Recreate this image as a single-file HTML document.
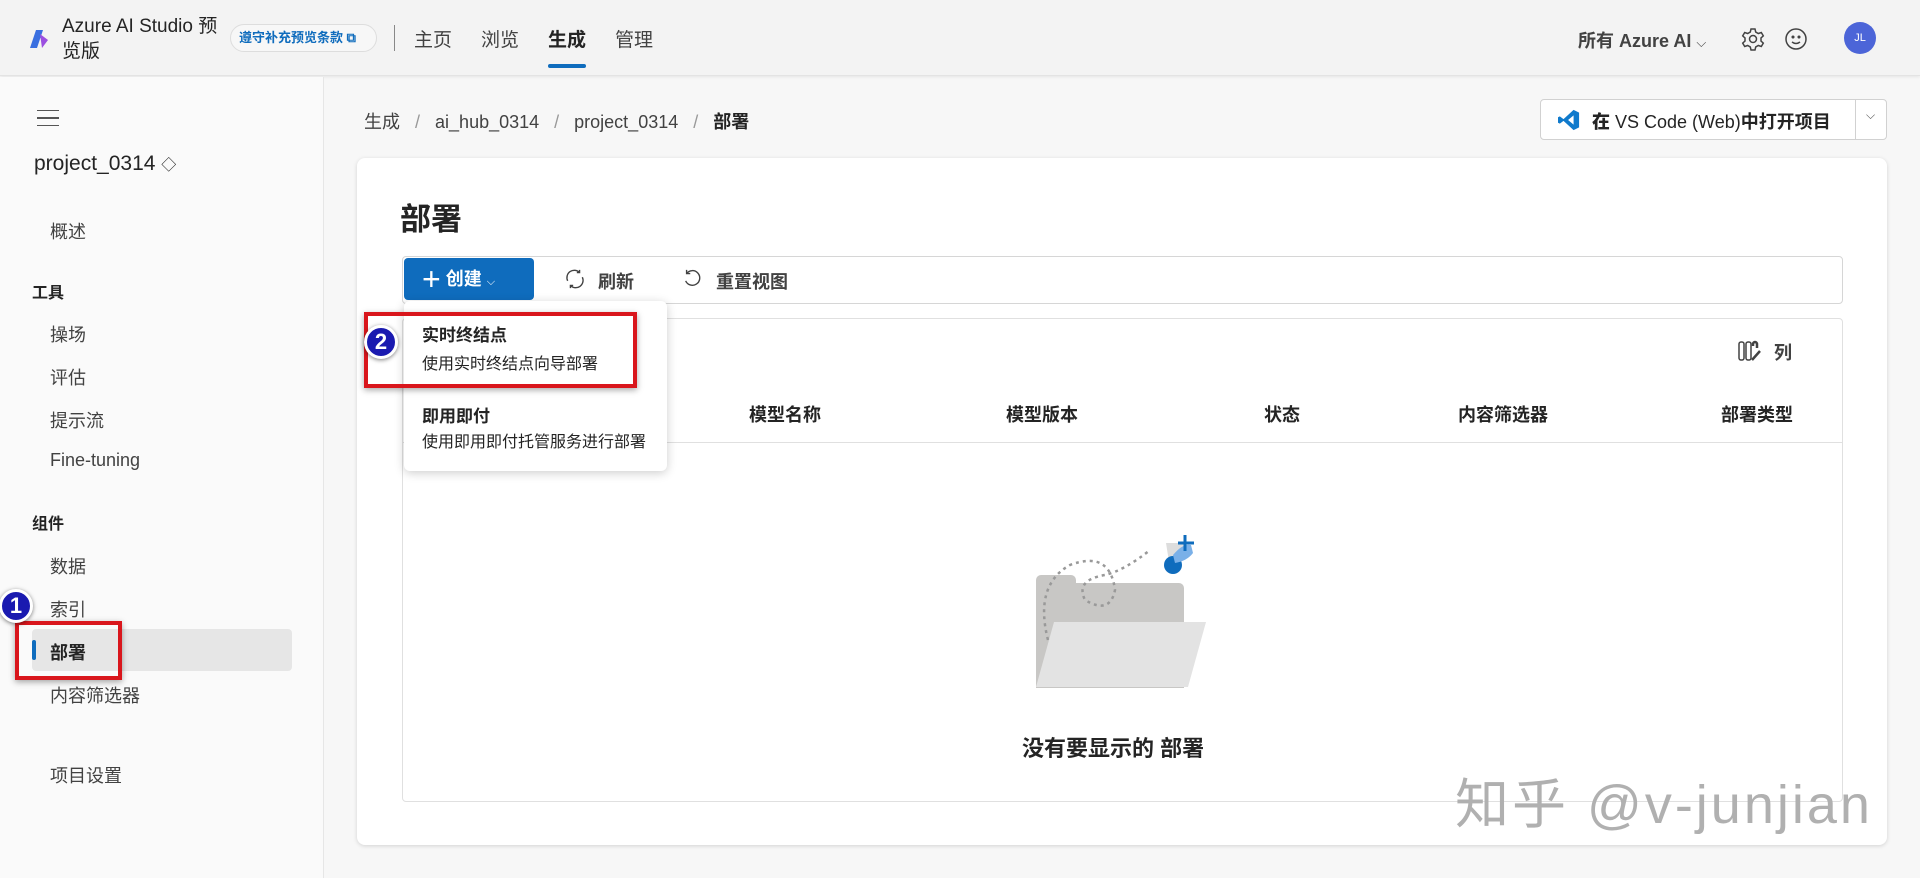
<!DOCTYPE html>
<html><head><meta charset="utf-8"><style>
*{box-sizing:border-box;margin:0;padding:0}
body{width:1920px;height:878px;overflow:hidden;background:#f7f7f7;font-family:"Liberation Sans","Noto Sans CJK SC",sans-serif;color:#242424;position:relative}
.a{position:absolute;white-space:nowrap}
.hdr{left:0;top:0;width:1920px;height:76px;background:#f3f3f3;border-bottom:1px solid #e3e3e3;box-shadow:0 1px 3px rgba(0,0,0,.08)}
.side{left:0;top:77px;width:324px;height:801px;background:#fafafa;border-right:1px solid #e6e6e6}
.nav{font-size:19px;top:25px;color:#424242}
.si{font-size:18px;left:50px;color:#424242}
.sh{font-size:16px;left:32px;font-weight:bold}
.th{font-size:18px;font-weight:bold;top:401px}
.badge{width:34px;height:34px;border-radius:50%;background:#1a1ab0;border:3px solid #fff;box-shadow:0 1px 4px rgba(0,0,0,.5);color:#fff;font-weight:bold;font-size:22px;text-align:center;line-height:28px}
.red{border:4px solid #d9161c;box-shadow:0 2px 6px rgba(0,0,0,.35)}
</style></head><body>
<div class="a hdr"></div>
<svg class="a" style="left:28px;top:28px" width="22" height="22" viewBox="0 0 22 22"><path d="M8 2h7l-6 18H2z" fill="#3a6fe0"/><path d="M12 6l8 6-6 8z" fill="#9b4fe0"/></svg>
<div class="a" style="left:62px;top:14px;font-size:19px;line-height:25px;color:#242424">Azure AI Studio 预<br>览版</div>
<div class="a" style="left:230px;top:24px;width:147px;height:28px;border:1px solid #ddd;border-radius:14px;background:#f7f7f7;font-size:13px;color:#0f6cbd;font-weight:bold;line-height:26px;padding-left:8px">遵守补充预览条款 ⧉</div>
<div class="a" style="left:394px;top:25px;width:1px;height:26px;background:#888"></div>
<div class="a nav" style="left:414px">主页</div>
<div class="a nav" style="left:481px">浏览</div>
<div class="a nav" style="left:548px;font-weight:bold;color:#242424">生成</div>
<div class="a" style="left:548px;top:64px;width:38px;height:4px;border-radius:2px;background:#0f6cbd"></div>
<div class="a nav" style="left:615px">管理</div>
<div class="a" style="left:1578px;top:27px;font-size:18px;font-weight:bold;color:#424242">所有 Azure AI <span style="font-weight:normal;font-size:13px">⌵</span></div>
<svg class="a" style="left:1741px;top:27px" width="24" height="24" viewBox="0 0 24 24" fill="none" stroke="#424242" stroke-width="1.5"><circle cx="12" cy="12" r="3.5"/><path d="M10 2h4l.7 3 2.6 1.5 3-1 2 3.4-2.3 2.1v3l2.3 2.1-2 3.4-3-1-2.6 1.5-.7 3h-4l-.7-3-2.6-1.5-3 1-2-3.4 2.3-2.1v-3L1.7 8.9l2-3.4 3 1L9.3 5z"/></svg>
<svg class="a" style="left:1784px;top:27px" width="24" height="24" viewBox="0 0 24 24" fill="none" stroke="#424242" stroke-width="1.5"><circle cx="12" cy="12" r="10"/><circle cx="9" cy="10" r=".8" fill="#424242"/><circle cx="15" cy="10" r=".8" fill="#424242"/><path d="M8 15q4 3 8 0"/></svg>
<div class="a" style="left:1844px;top:22px;width:32px;height:32px;border-radius:50%;background:#4c65d8;color:#fff;font-size:11px;text-align:center;line-height:32px">JL</div>

<div class="a side"></div>
<div class="a" style="left:37px;top:110px;width:22px;height:16px;border-top:1.5px solid #555;border-bottom:1.5px solid #555"><div style="margin-top:6px;height:1.5px;background:#555"></div></div>
<div class="a" style="left:34px;top:152px;font-size:21px">project_0314 <span style="font-size:15px">◇</span></div>
<div class="a si" style="top:218px">概述</div>
<div class="a sh" style="top:279px">工具</div>
<div class="a si" style="top:321px">操场</div>
<div class="a si" style="top:364px">评估</div>
<div class="a si" style="top:407px">提示流</div>
<div class="a si" style="top:450px">Fine-tuning</div>
<div class="a sh" style="top:510px">组件</div>
<div class="a si" style="top:553px">数据</div>
<div class="a si" style="top:596px">索引</div>
<div class="a" style="left:32px;top:629px;width:260px;height:42px;background:#e6e6e6;border-radius:4px"></div>
<div class="a" style="left:32px;top:640px;width:4px;height:20px;background:#0f6cbd;border-radius:2px"></div>
<div class="a si" style="top:639px;font-weight:bold;color:#242424">部署</div>
<div class="a si" style="top:682px">内容筛选器</div>
<div class="a si" style="top:762px">项目设置</div>
<div class="a red" style="left:15px;top:621px;width:107px;height:59px"></div>
<div class="a badge" style="left:-1px;top:589px">1</div>

<div class="a" style="left:364px;top:108px;font-size:18px;color:#424242">生成 <span style="color:#999;margin:0 10px">/</span> ai_hub_0314 <span style="color:#999;margin:0 10px">/</span> project_0314 <span style="color:#999;margin:0 10px">/</span> <b style="color:#242424">部署</b></div>
<div class="a" style="left:1540px;top:99px;width:347px;height:41px;background:#fff;border:1px solid #d1d1d1;border-radius:4px"></div>
<div class="a" style="left:1855px;top:100px;width:1px;height:39px;background:#d1d1d1"></div>
<svg class="a" style="left:1558px;top:109px" width="22" height="22" viewBox="0 0 24 24"><path d="M17 1l6 3v16l-6 3L6 13l-4 3-2-1V9l2-1 4 3zM17 7l-6 5 6 5z" fill="#0f7acc"/></svg>
<div class="a" style="left:1592px;top:108px;font-size:18px;font-weight:bold"><b>在</b> <span style="font-weight:normal">VS Code (Web)</span>中打开项目</div>
<div class="a" style="left:1866px;top:108px;font-size:12px;color:#555">⌵</div>

<div class="a" style="left:357px;top:158px;width:1530px;height:687px;background:#fff;border-radius:8px;box-shadow:0 1px 4px rgba(0,0,0,.15)"></div>
<div class="a" style="left:400px;top:194px;font-size:31px;font-weight:bold">部署</div>
<div class="a" style="left:402px;top:256px;width:1441px;height:48px;border:1px solid #d6d6d6;border-radius:4px"></div>
<div class="a" style="left:404px;top:258px;width:130px;height:42px;background:#0f6cbd;border-radius:4px;color:#fff;font-size:18px;font-weight:bold;line-height:42px;padding-left:18px"><span style="font-weight:normal;font-size:32px;vertical-align:-5px">+</span> 创建 <span style="font-size:11px;font-weight:normal">⌵</span></div>
<svg class="a" style="left:564px;top:268px" width="22" height="22" viewBox="0 0 24 24" fill="none" stroke="#424242" stroke-width="1.5"><path d="M4 14a8 8 0 0 1 13-9M20 10a8 8 0 0 1-13 9M17 2v3h-3M7 22v-3h3"/></svg>
<div class="a" style="left:598px;top:268px;font-size:18px;font-weight:bold;color:#424242">刷新</div>
<svg class="a" style="left:682px;top:268px" width="22" height="22" viewBox="0 0 24 24" fill="none" stroke="#424242" stroke-width="1.5"><path d="M5 6a8 8 0 1 1-1 8M5 2v4h4"/></svg>
<div class="a" style="left:716px;top:268px;font-size:18px;font-weight:bold;color:#424242">重置视图</div>

<div class="a" style="left:402px;top:318px;width:1441px;height:484px;border:1px solid #e0e0e0;border-radius:4px"></div>
<svg class="a" style="left:1738px;top:340px" width="24" height="22" viewBox="0 0 24 22" fill="none" stroke="#424242" stroke-width="1.5"><rect x="1" y="2" width="5" height="18" rx="2"/><rect x="8" y="2" width="5" height="18" rx="2"/><path d="M15 6V4a2 2 0 0 1 4 0v4M14 20l8-9" stroke-width="2.5"/></svg>
<div class="a" style="left:1774px;top:339px;font-size:18px;font-weight:bold;color:#424242">列</div>
<div class="a th" style="left:749px">模型名称</div>
<div class="a th" style="left:1006px">模型版本</div>
<div class="a th" style="left:1264px">状态</div>
<div class="a th" style="left:1458px">内容筛选器</div>
<div class="a th" style="left:1721px">部署类型</div>
<div class="a" style="left:403px;top:442px;width:1439px;height:1px;background:#e0e0e0"></div>

<svg class="a" style="left:1030px;top:515px" width="190" height="185" viewBox="0 0 190 185">
<path d="M6 85a5 5 0 0 1 5-5h30a5 5 0 0 1 5 5v3h103a5 5 0 0 1 5 5v100H6z" fill="#c8c7c5" transform="translate(0,-20)"/>
<path d="M24 107h152l-18 65H6z" fill="#e3e3e3"/>
<path d="M18 125Q4 70 40 50q40-15 45 25q-5 25-30 10q-10-20 20-25q20-5 45-25" fill="none" stroke="#999" stroke-width="2.5" stroke-dasharray="3 4"/>
<path d="M136 28h22l-10 10v15h-8z" fill="#ddd"/>
<circle cx="143" cy="50" r="9" fill="#0f6cbd"/>
<path d="M143 40q10-12 18-10l2 8q-6 8-18 10z" fill="#7ab0e8"/>
<path d="M155 20v16M148 28h16" stroke="#0f6cbd" stroke-width="3"/>
</svg>
<div class="a" style="left:1022px;top:731px;font-size:22px;font-weight:bold">没有要显示的 部署</div>

<div class="a" style="left:404px;top:301px;width:263px;height:170px;background:#fff;border-radius:6px;box-shadow:0 2px 10px rgba(0,0,0,.2)"></div>
<div class="a" style="left:422px;top:321px;font-size:17px;font-weight:bold">实时终结点</div>
<div class="a" style="left:422px;top:350px;font-size:16px">使用实时终结点向导部署</div>
<div class="a" style="left:422px;top:402px;font-size:17px;font-weight:bold">即用即付</div>
<div class="a" style="left:422px;top:428px;font-size:16px">使用即用即付托管服务进行部署</div>
<div class="a red" style="left:364px;top:312px;width:273px;height:76px"></div>
<div class="a badge" style="left:364px;top:325px">2</div>

<div class="a" style="left:1455px;top:760px;font-size:54px;color:#b0b0b0;letter-spacing:3px">知乎 @v-junjian</div>
</body></html>
